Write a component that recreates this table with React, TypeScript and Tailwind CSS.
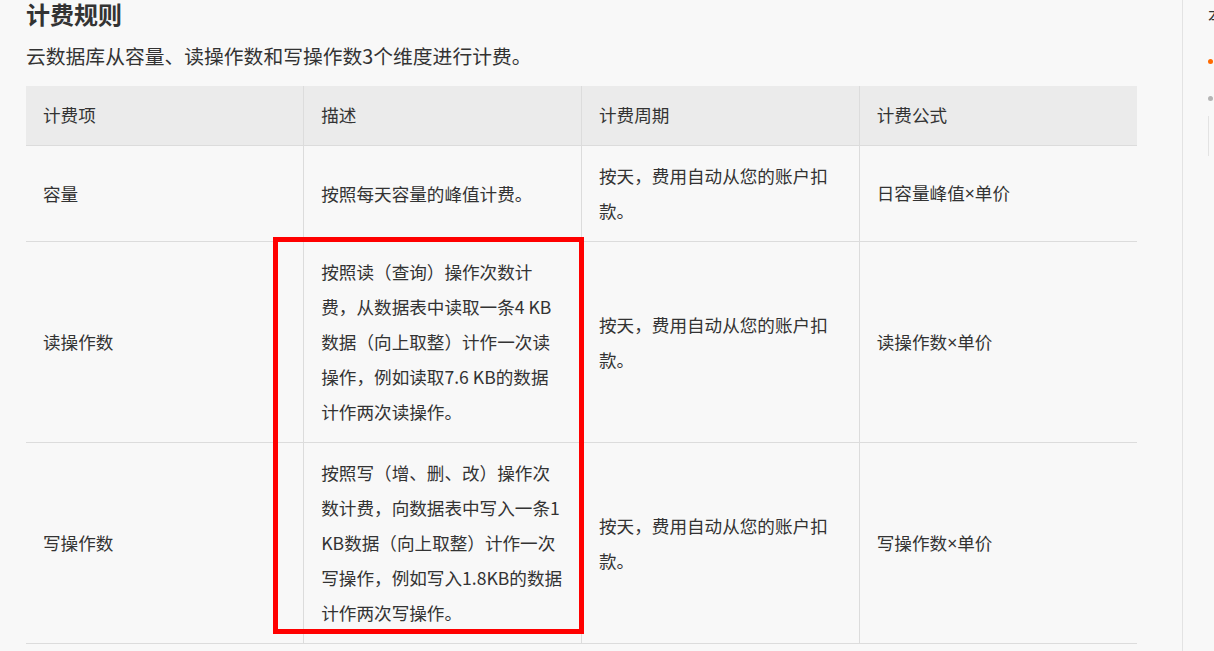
import React from "react";

type Row = {
  item: string;
  desc: string;
  cycle: string;
  formula: [string, string];
};

const columns = ["计费项", "描述", "计费周期", "计费公式"];

const rows: Row[] = [
  {
    item: "容量",
    desc: "按照每天容量的峰值计费。",
    cycle: "按天，费用自动从您的账户扣款。",
    formula: ["日容量峰值", "单价"],
  },
  {
    item: "读操作数",
    desc: "按照读（查询）操作次数计费，从数据表中读取一条4 KB数据（向上取整）计作一次读操作，例如读取7.6 KB的数据计作两次读操作。",
    cycle: "按天，费用自动从您的账户扣款。",
    formula: ["读操作数", "单价"],
  },
  {
    item: "写操作数",
    desc: "按照写（增、删、改）操作次数计费，向数据表中写入一条1 KB数据（向上取整）计作一次写操作，例如写入1.8KB的数据计作两次写操作。",
    cycle: "按天，费用自动从您的账户扣款。",
    formula: ["写操作数", "单价"],
  },
];

const cellClass =
  "border-b border-l border-[#dcdcdc] px-[17px] pt-[12px] pb-[13px] align-middle first:border-l-0";

export default function App() {
  return (
    <div className="flex h-[651px] w-[1214px] overflow-hidden bg-[#f8f8f8] font-['Noto_Sans_CJK_SC','Noto_Sans',sans-serif] text-[#333]">
      {/* 正文 */}
      <main className="w-[1183px] shrink-0 border-r border-[#e3e3e3] pl-[26px]">
        <h2 className="text-[24px] leading-[28px] font-bold">计费规则</h2>
        <p className="mt-[10px] text-[19.8px] leading-[35px]">
          云数据库从容量、读操作数和写操作数3个维度进行计费。
        </p>

        <div className="relative mt-[13px] w-[1111px]">
          <table className="w-full table-fixed border-collapse text-[17.6px] leading-[35px]">
            <thead>
              <tr className="bg-[#ebebeb]">
                {columns.map((col) => (
                  <th
                    key={col}
                    className="border-b border-l border-[#dcdcdc] px-[17px] pt-[11px] pb-[13px] text-left font-normal first:border-l-0"
                  >
                    {col}
                  </th>
                ))}
              </tr>
            </thead>
            <tbody>
              {rows.map((row) => (
                <tr key={row.item}>
                  <td className={cellClass}>{row.item}</td>
                  <td className={cellClass}>{row.desc}</td>
                  <td className={cellClass}>{row.cycle}</td>
                  <td className={cellClass}>
                    {row.formula[0]}
                    <span className="font-['Noto_Sans',sans-serif]">×</span>
                    {row.formula[1]}
                  </td>
                </tr>
              ))}
            </tbody>
          </table>

          {/* 标注框 */}
          <div className="pointer-events-none absolute left-[247px] top-[151px] h-[397px] w-[311px] border-[5px] border-[#ff0000]" />
        </div>
      </main>

      {/* 右侧目录 */}
      <aside className="w-[200px] shrink-0 pl-[25px]">
        <div className="mt-[4px] text-[17px] leading-[22px] whitespace-nowrap">本页导航</div>
        <ul className="mt-[33px] space-y-[32px] text-[15px] leading-[8px]">
          <li className="flex items-center gap-2 whitespace-nowrap">
            <span className="h-[5px] w-[5px] rounded-full bg-[#ff6a00]" />
          </li>
          <li className="flex items-center gap-2 whitespace-nowrap">
            <span className="h-[5px] w-[5px] rounded-full bg-[#b5b5b5]" />
          </li>
        </ul>
        <div className="mt-[15px] h-[40px] w-px bg-[#e3e3e3]" />
      </aside>
    </div>
  );
}
